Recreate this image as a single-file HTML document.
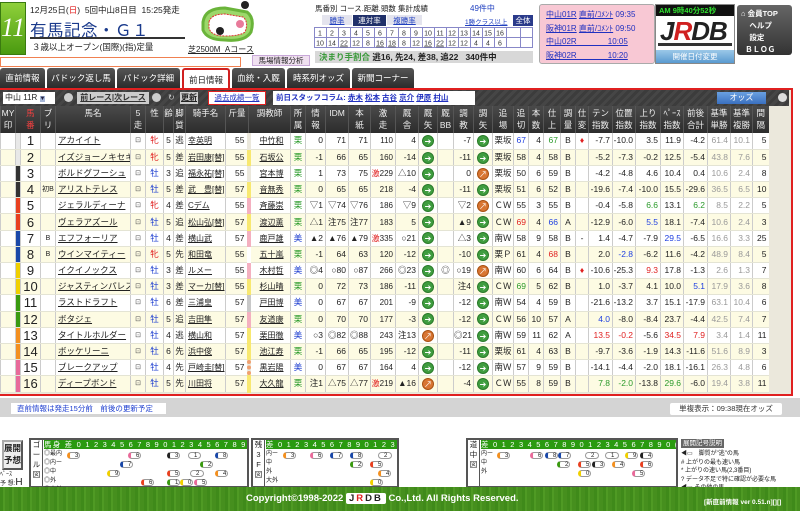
<!DOCTYPE html>
<html><head><meta charset="utf-8">
<style>
*{margin:0;padding:0;box-sizing:border-box}
body{width:800px;height:516px;overflow:hidden;background:#fff;font-family:"Liberation Sans","Noto Sans CJK JP",sans-serif;font-size:9px;color:#222;position:relative}
.a{position:absolute;white-space:nowrap}
a,.u{text-decoration:underline}
#badge{left:0;top:2px;width:26px;height:53px;background:linear-gradient(#8fd03a,#4a9a10);color:#fff;font:italic 26px "Liberation Serif",serif;text-align:center;line-height:50px;border:1px solid #3a7a10}
.tab{top:68px;height:21px;background:linear-gradient(#555,#2a2a2a);color:#fff;font-size:8.5px;text-align:center;line-height:20px;border-radius:3px 3px 0 0}
.tab.on{background:#fff;color:#222;border:2px solid #d02020;border-bottom:none;height:22px}
#box{left:0;top:88px;width:793px;height:308px;border:2px solid #e02020;border-left:none;background:#ebe8dc}
#tb{left:0;top:90px;width:789px;height:16px;background:repeating-linear-gradient(135deg,#3c3c3c 0 3px,#464646 3px 6px)}
table{position:absolute;left:0;top:106px;border-collapse:collapse;table-layout:fixed;width:768px}
th{background:linear-gradient(#4a4a4a,#2c2c2c);color:#eee;font-weight:normal;font-size:8.5px;height:27px;line-height:12px;vertical-align:top;padding-top:1px;border-left:1px solid #555;text-align:center;overflow:hidden;white-space:nowrap}
td{height:16.2px;border-left:1px solid #ccc;border-bottom:1px solid #e4e4d4;font-size:8.5px;text-align:right;padding:0 2px 0 0;white-space:nowrap;overflow:hidden;line-height:15px}
tr:nth-child(odd) td{background:#fdfbe3}
tr:nth-child(even) td{background:#fff}
td:nth-child(3){text-align:center;font-size:13px;padding:0}
td:nth-child(4),td:nth-child(6),td:nth-child(7),td:nth-child(8),td:nth-child(9),td:nth-child(13),td:nth-child(19),td:nth-child(20),td:nth-child(22),td:nth-child(23),td:nth-child(27),td:nth-child(28){text-align:center;padding:0}
td:nth-child(5),td:nth-child(10),td:nth-child(12){text-align:left;padding-left:2px}
td:nth-child(5) span{text-decoration:underline;font-size:8.5px}
td:nth-child(10),td:nth-child(12){text-decoration:underline;font-size:8px}
td:nth-child(12){border-left:4px solid transparent;padding-left:9px}
td:nth-child(34),td:nth-child(35){color:#999}
td:nth-child(4){font-size:7px}
td:nth-child(6){font-size:7px;color:#555}
td:nth-child(17){font-size:8px}
i.g,i.o{display:inline-block;width:12px;height:12px;border-radius:50%;vertical-align:middle;font-style:normal;color:#fff;font-size:8px;line-height:11px;text-align:center}
i.g{background:#3f9d3f;border:1px solid #2a7a2a}
i.o{background:#d87532;border:1px solid #a85010}
.R{color:#e02020}.B{color:#2040e0}.G{color:#2a9a2a}
.f{color:#e02020}.m{color:#2040d0}
.k{color:#2a9a2a}.mi{color:#2040d0}
.pill{position:absolute;height:7px;border-radius:4px;border:1px solid #999;background:#fff;font-size:6px;line-height:6px;padding-left:5px}
.dg{position:absolute;border:2px solid #555;background:#fff}
.dh{position:absolute;height:9px;background:#2a9a10;color:#fff;font-size:7.5px;line-height:9px;letter-spacing:1.2px;white-space:nowrap;overflow:hidden}
</style></head><body>

<div id="badge" class="a">11</div>
<div class="a" style="left:30px;top:4px;font-size:8.5px">12月25日(<span class="R">日</span>)&nbsp;&nbsp;5回中山8日目&nbsp;&nbsp;15:25発走</div>
<div class="a" style="left:30px;top:17px;font-size:16.5px;color:#1a3a8c;letter-spacing:.5px">有馬記念・Ｇ１</div>
<div class="a" style="left:30px;top:37px;width:155px;height:2px;background:#333"></div>
<div class="a" style="left:32px;top:41px;font-size:8.5px">３歳以上オープン(国際)(指)定量</div>
<svg class="a" style="left:195px;top:0" width="62" height="46"><path d="M8 22 Q10 8 30 8 L52 12 Q60 18 56 32 Q50 42 30 40 Q12 40 8 30Z" fill="#9cd86a" stroke="#6ab43a" stroke-width="3"/><path d="M14 22 Q16 14 30 14 L48 17 Q54 22 50 32 Q45 36 30 36 Q16 36 14 28Z" fill="#fff" stroke="#e03030" stroke-width="1" stroke-dasharray="2 1"/><circle cx="45" cy="24" r="4" fill="#e87a9a"/><circle cx="50" cy="5" r="4" fill="#222"/><circle cx="25" cy="31" r="4" fill="#222"/></svg>
<div class="a u" style="left:188px;top:44px;font-size:8px">芝2500M&nbsp;&nbsp;Aコース</div>
<div class="a" style="left:0;top:57px;width:241px;height:10px;border:1px solid #f08050;background:#fff"></div>
<div class="a" style="left:252px;top:55px;width:58px;height:11px;background:#f0e0f0;border:1px solid #c8a8d8;font-size:7.5px;text-align:center;line-height:10px">馬場情報分析</div>

<div class="a" style="left:315px;top:3px;font-size:7.5px">馬番別 コース.距離.頭数 集計成績</div>
<div class="a" style="left:470px;top:3px;font-size:8px;color:#2040c0">49件中</div>
<div class="a u" style="left:322px;top:15px;width:30px;height:10px;background:#e4e4ee;font-size:7.5px;color:#2040c0;text-align:center">勝率</div>
<div class="a" style="left:353px;top:15px;width:33px;height:11px;background:#20306a;font-size:7.5px;color:#fff;text-align:center">連対率</div>
<div class="a u" style="left:387px;top:15px;width:35px;height:10px;background:#e4e4ee;font-size:7.5px;color:#2040c0;text-align:center">複勝率</div>
<div class="a u" style="left:465px;top:16px;font-size:6.5px;color:#2040c0">1勝クラス以上</div>
<div class="a" style="left:513px;top:15px;width:20px;height:11px;background:#2a3a8a;color:#fff;font-size:7.5px;text-align:center">全体</div>
<svg class="a" style="left:314px;top:27px" width="220" height="22"><g fill="none" stroke="#8888c8"><rect x=".5" y=".5" width="218" height="20"/><line x1="0" y1="10.5" x2="219" y2="10.5"/>
<path d="M12.5 0V21M24.5 0V21M36.5 0V21M48.5 0V21M60.5 0V21M72.5 0V21M84.5 0V21M96.5 0V21M108.5 0V21M120.5 0V21M132.5 0V21M144.5 0V21M156.5 0V21M168.5 0V21M180.5 0V21M192.5 0V21M206.5 0V21"/></g>
<g font-size="7" fill="#333" text-anchor="middle" font-family="Liberation Sans"><text x="6" y="8.5">1</text><text x="18" y="8.5">2</text><text x="30" y="8.5">3</text><text x="42" y="8.5">4</text><text x="54" y="8.5">5</text><text x="66" y="8.5">6</text><text x="78" y="8.5">7</text><text x="90" y="8.5">8</text><text x="102" y="8.5">9</text><text x="114" y="8.5">10</text><text x="126" y="8.5">11</text><text x="138" y="8.5">12</text><text x="150" y="8.5">13</text><text x="162" y="8.5">14</text><text x="174" y="8.5">15</text><text x="186" y="8.5">16</text>
<text x="6" y="18.5">10</text><text x="18" y="18.5">14</text><text x="30" y="18.5" text-decoration="underline">22</text><text x="42" y="18.5">12</text><text x="54" y="18.5">8</text><text x="66" y="18.5" text-decoration="underline">16</text><text x="78" y="18.5" text-decoration="underline">18</text><text x="90" y="18.5">8</text><text x="102" y="18.5">12</text><text x="114" y="18.5" text-decoration="underline">16</text><text x="126" y="18.5" text-decoration="underline">22</text><text x="138" y="18.5">12</text><text x="150" y="18.5">12</text><text x="162" y="18.5">4</text><text x="174" y="18.5">4</text><text x="186" y="18.5">6</text></g></svg>
<div class="a" style="left:315px;top:51px;width:218px;height:12px;background:#d8d8d8;font-size:8.5px;font-weight:bold;line-height:12px;padding-left:4px"><span style="color:#3a9a3a">決まり手割合</span> 逃16, 先24, 差38, 追22&nbsp;&nbsp;&nbsp;340件中</div>

<div class="a" style="left:539px;top:4px;width:116px;height:60px;background:#f8c8d4;border:1px solid #aaa;border-radius:3px;font-size:8px;color:#2030c0;line-height:13.5px;padding:3px 0 0 6px"><span class="u">中山01R</span> <span class="u">直前/ｺﾒﾝﾄ</span> 09:35<br><span class="u">阪神01R</span> <span class="u">直前/ｺﾒﾝﾄ</span> 09:50<br><span class="u">中山02R&nbsp;&nbsp;&nbsp;&nbsp;&nbsp;&nbsp;&nbsp;&nbsp;&nbsp;&nbsp;&nbsp;&nbsp;&nbsp;&nbsp;10:05</span><br><span class="u">阪神02R&nbsp;&nbsp;&nbsp;&nbsp;&nbsp;&nbsp;&nbsp;&nbsp;&nbsp;&nbsp;&nbsp;&nbsp;&nbsp;&nbsp;10:20</span></div>
<div class="a" style="left:655px;top:4px;width:80px;height:60px;background:#fff;border:1px solid #888"></div>
<div class="a" style="left:656px;top:5px;width:78px;height:11px;background:#111;color:#30e030;font-size:7.5px;line-height:11px;padding-left:3px;font-weight:bold">AM 9時40分52秒</div>
<div class="a" style="left:660px;top:17px;width:74px;height:26px;font:italic bold 26px 'Liberation Sans',sans-serif;color:#222;letter-spacing:-1px;line-height:28px">J<span style="color:#d02020">R</span>DB</div>
<div class="a" style="left:658px;top:43px;width:74px;height:3px;background:#333"></div>
<div class="a" style="left:656px;top:50px;width:78px;height:13px;background:linear-gradient(#9cc8e8,#5a9ad0);color:#fff;font-size:7.5px;text-align:center;line-height:13px">開催日付変更</div>
<div class="a" style="left:737px;top:5px;width:55px;height:50px;background:linear-gradient(#666,#333);border-radius:3px;color:#fff;font-size:7.5px;font-weight:bold;line-height:12px;padding:3px 0 0 4px">⌂ 会員TOP<br>&nbsp;&nbsp;&nbsp;&nbsp;ヘルプ<br>&nbsp;&nbsp;&nbsp;&nbsp;設定<br>&nbsp;&nbsp;ＢＬＯＧ</div>

<div class="a tab" style="left:0;width:45px">直前情報</div>
<div class="a tab" style="left:47px;width:68px">パドック返し馬</div>
<div class="a tab" style="left:117px;width:63px">パドック詳細</div>
<div class="a tab on" style="left:182px;width:48px">前日情報</div>
<div class="a tab" style="left:232px;width:53px">血統・入厩</div>
<div class="a tab" style="left:287px;width:63px">時系列オッズ</div>
<div class="a tab" style="left:352px;width:62px">新聞コーナー</div>

<div id="box" class="a"></div>
<div id="tb" class="a"></div>
<div class="a" style="left:3px;top:92px;width:52px;height:12px;background:#fff;font-size:8px;line-height:12px;padding-left:2px">中山 11R <span style="background:#a8b8d8;color:#224;font-size:6px">▼</span></div>
<div class="a" style="left:64px;top:93px;width:9px;height:9px;border-radius:50%;background:#ccc"></div>
<div class="a" style="left:77px;top:92px;width:72px;height:12px;background:#ccc;font-size:8px;line-height:12px;text-align:center;font-weight:bold;color:#333"><span class="u">前レース</span>|<span class="u">次レース</span></div>
<div class="a" style="left:152px;top:93px;width:9px;height:9px;border-radius:50%;background:#ccc"></div>
<div class="a" style="left:168px;top:93px;color:#ccc;font-size:8px">↻</div>
<div class="a u" style="left:180px;top:92px;width:18px;height:12px;background:#ccc;font-size:8px;line-height:12px;text-align:center;font-weight:bold">更新</div>
<div class="a u" style="left:208px;top:91px;width:58px;height:14px;background:#fff;border:1.5px solid #e02020;font-size:7.5px;line-height:11px;text-align:center;color:#2030c0">過去成績一覧</div>
<div class="a" style="left:273px;top:91px;width:202px;height:14px;background:#fff;font-size:7.5px;line-height:14px;padding-left:3px;color:#2030c0;font-weight:bold">前日スタッフコラム: <span class="u">赤木</span> <span class="u">松本</span> <span class="u">古谷</span> <span class="u">京介</span> <span class="u">伊原</span> <span class="u">村山</span></div>
<div class="a" style="left:717px;top:92px;width:49px;height:12px;background:linear-gradient(#6aa0e0,#3a70c0);color:#fff;font-size:8px;text-align:center;line-height:12px">オッズ</div>
<div class="a" style="left:778px;top:93px;width:9px;height:9px;border-radius:50%;background:#ddd"></div>

<table>
<colgroup><col style="width:15px"><col style="width:5px"><col style="width:20px"><col style="width:15px"><col style="width:75px"><col style="width:15px"><col style="width:18px"><col style="width:10px"><col style="width:12px"><col style="width:40px"><col style="width:23px"><col style="width:42px"><col style="width:15px"><col style="width:20px"><col style="width:23px"><col style="width:22px"><col style="width:25px"><col style="width:23px"><col style="width:19px"><col style="width:16px"><col style="width:20px"><col style="width:19px"><col style="width:21px"><col style="width:15px"><col style="width:15px"><col style="width:17px"><col style="width:15px"><col style="width:13px"><col style="width:24px"><col style="width:23px"><col style="width:25px"><col style="width:23px"><col style="width:24px"><col style="width:23px"><col style="width:22px"><col style="width:16px"></colgroup>
<tr><th>MY<br>印</th><th colspan="2" style="color:#f04040">&nbsp;&nbsp;馬<br>&nbsp;&nbsp;番</th><th>ブ<br>リ</th><th>馬名</th><th>5<br>走</th><th>性</th><th>齢</th><th>脚<br>質</th><th>騎手名</th><th>斤量</th><th>調教師</th><th>所<br>属</th><th>情<br>報</th><th>IDM</th><th>本<br>紙</th><th>激<br>走</th><th>厩<br>舎</th><th>厩<br>矢</th><th>厩<br>BB</th><th>調<br>教</th><th>調<br>矢</th><th>追<br>場</th><th>追<br>切</th><th>本<br>数</th><th>仕<br>上</th><th>調<br>量</th><th>仕<br>変</th><th>テン<br>指数</th><th>位置<br>指数</th><th>上り<br>指数</th><th>ﾍﾟｰｽ<br>指数</th><th>前後<br>合計</th><th>基準<br>単勝</th><th>基準<br>複勝</th><th>間<br>隔</th></tr>
<tr><td></td><td style="background:#e8e8e8"></td><td>1</td><td></td><td><span>アカイイト</span></td><td>⊡</td><td class="f">牝</td><td>5</td><td>逃</td><td>幸英明</td><td>55</td><td>中竹和</td><td class="k">栗</td><td>0</td><td>71</td><td>71</td><td>110</td><td>4</td><td><i class="g">➔</i></td><td></td><td>-7</td><td><i class="g">➔</i></td><td>栗坂</td><td class="B">67</td><td>4</td><td class="G">67</td><td>B</td><td class="R">♦</td><td>-7.7</td><td>-10.0</td><td>3.5</td><td>11.9</td><td>-4.2</td><td>61.4</td><td>10.1</td><td>5</td></tr>
<tr><td></td><td style="background:#e8e8e8"></td><td>2</td><td></td><td><span>イズジョーノキセキ</span></td><td>⊡</td><td class="f">牝</td><td>5</td><td>差</td><td>岩田康[替]</td><td>55</td><td style="border-left-color:#f8e870">石坂公</td><td class="k">栗</td><td>-1</td><td>66</td><td>65</td><td>160</td><td>-14</td><td><i class="g">➔</i></td><td></td><td>-11</td><td><i class="g">➔</i></td><td>栗坂</td><td>58</td><td>4</td><td>58</td><td>B</td><td></td><td>-5.2</td><td>-7.3</td><td>-0.2</td><td>12.5</td><td>-5.4</td><td>43.8</td><td>7.6</td><td>5</td></tr>
<tr><td></td><td style="background:#333"></td><td>3</td><td></td><td><span>ボルドグフーシュ</span></td><td>⊡</td><td class="m">牡</td><td>3</td><td>追</td><td>福永祐[替]</td><td>55</td><td>宮本博</td><td class="k">栗</td><td>1</td><td>73</td><td>75</td><td><span class="R">激</span>229</td><td>△10</td><td><i class="g">➔</i></td><td></td><td>0</td><td><i class="o">↗</i></td><td>栗坂</td><td>50</td><td>6</td><td>59</td><td>B</td><td></td><td>-4.2</td><td>-4.8</td><td>4.6</td><td>10.4</td><td>0.4</td><td>10.6</td><td>2.4</td><td>8</td></tr>
<tr><td></td><td style="background:#333"></td><td>4</td><td>初B</td><td><span>アリストテレス</span></td><td>⊡</td><td class="m">牡</td><td>5</td><td>差</td><td>武　豊[替]</td><td>57</td><td style="border-left-color:#f8e870">音無秀</td><td class="k">栗</td><td>0</td><td>65</td><td>65</td><td>218</td><td>-4</td><td><i class="g">➔</i></td><td></td><td>-11</td><td><i class="g">➔</i></td><td>栗坂</td><td>51</td><td>6</td><td>52</td><td>B</td><td></td><td>-19.6</td><td>-7.4</td><td>-10.0</td><td>15.5</td><td>-29.6</td><td>36.5</td><td>6.5</td><td>10</td></tr>
<tr><td></td><td style="background:#e84020"></td><td>5</td><td></td><td><span>ジェラルディーナ</span></td><td>⊡</td><td class="f">牝</td><td>4</td><td>差</td><td>Cデム</td><td>55</td><td style="border-left-color:#f4b0c0">斉藤崇</td><td class="k">栗</td><td>▽1</td><td>▽74</td><td>▽76</td><td>186</td><td>▽9</td><td><i class="g">➔</i></td><td></td><td>▽2</td><td><i class="o">↗</i></td><td>ＣＷ</td><td>55</td><td>3</td><td>55</td><td>B</td><td></td><td>-0.4</td><td>-5.8</td><td class="G">6.6</td><td>13.1</td><td class="G">6.2</td><td>8.5</td><td>2.2</td><td>5</td></tr>
<tr><td></td><td style="background:#e84020"></td><td>6</td><td></td><td><span>ヴェラアズール</span></td><td>⊡</td><td class="m">牡</td><td>5</td><td>追</td><td>松山弘[替]</td><td>57</td><td style="border-left-color:#f8e870">渡辺薫</td><td class="k">栗</td><td>△1</td><td>注75</td><td>注77</td><td>183</td><td>5</td><td><i class="g">➔</i></td><td></td><td>▲9</td><td><i class="g">➔</i></td><td>ＣＷ</td><td class="R">69</td><td>4</td><td class="B">66</td><td>A</td><td></td><td>-12.9</td><td>-6.0</td><td class="B">5.5</td><td>18.1</td><td>-7.4</td><td>10.6</td><td>2.4</td><td>3</td></tr>
<tr><td></td><td style="background:#1a48a8"></td><td>7</td><td>B</td><td><span>エフフォーリア</span></td><td>⊡</td><td class="m">牡</td><td>4</td><td>差</td><td>横山武</td><td>57</td><td style="border-left-color:#f4b0c0">鹿戸雄</td><td class="mi">美</td><td>▲2</td><td>▲76</td><td>▲79</td><td><span class="R">激</span>335</td><td>○21</td><td><i class="g">➔</i></td><td></td><td>△3</td><td><i class="g">➔</i></td><td>南Ｗ</td><td>58</td><td>9</td><td>58</td><td>B</td><td>-</td><td>1.4</td><td>-4.7</td><td>-7.9</td><td class="B">29.5</td><td>-6.5</td><td>16.6</td><td>3.3</td><td>25</td></tr>
<tr><td></td><td style="background:#1a48a8"></td><td>8</td><td>B</td><td><span>ウインマイティー</span></td><td>⊡</td><td class="f">牝</td><td>5</td><td>先</td><td>和田竜</td><td>55</td><td style="border-left-color:#fff">五十嵐</td><td class="k">栗</td><td>-1</td><td>64</td><td>63</td><td>120</td><td>-12</td><td><i class="g">➔</i></td><td></td><td>-10</td><td><i class="g">➔</i></td><td>栗Ｐ</td><td>61</td><td>4</td><td class="R">68</td><td>B</td><td></td><td>2.0</td><td class="B">-2.8</td><td>-6.2</td><td>11.6</td><td>-4.2</td><td>48.9</td><td>8.4</td><td>5</td></tr>
<tr><td></td><td style="background:#f0d000"></td><td>9</td><td></td><td><span>イクイノックス</span></td><td>⊡</td><td class="m">牡</td><td>3</td><td>差</td><td>ルメー</td><td>55</td><td style="border-left-color:#f4b0c0">木村哲</td><td class="mi">美</td><td>◎4</td><td>○80</td><td>○87</td><td>266</td><td>◎23</td><td><i class="g">➔</i></td><td>◎</td><td>○19</td><td><i class="o">↗</i></td><td>南Ｗ</td><td>60</td><td>6</td><td>64</td><td>B</td><td class="R">♦</td><td>-10.6</td><td>-25.3</td><td class="R">9.3</td><td>17.8</td><td>-1.3</td><td>2.6</td><td>1.3</td><td>7</td></tr>
<tr><td></td><td style="background:#f0d000"></td><td>10</td><td></td><td><span>ジャスティンパレス</span></td><td>⊡</td><td class="m">牡</td><td>3</td><td>差</td><td>マーカ[替]</td><td>55</td><td style="border-left-color:#f8e870">杉山晴</td><td class="k">栗</td><td>0</td><td>72</td><td>73</td><td>186</td><td>-11</td><td><i class="g">➔</i></td><td></td><td>注4</td><td><i class="g">➔</i></td><td>ＣＷ</td><td class="G">69</td><td>5</td><td>62</td><td>B</td><td></td><td>1.0</td><td>-3.7</td><td>4.1</td><td>10.0</td><td class="B">5.1</td><td>17.9</td><td>3.6</td><td>8</td></tr>
<tr><td></td><td style="background:#3a9a10"></td><td>11</td><td></td><td><span>ラストドラフト</span></td><td>⊡</td><td class="m">牡</td><td>6</td><td>差</td><td>三浦皇</td><td>57</td><td style="border-left-color:#c8c8c8">戸田博</td><td class="mi">美</td><td>0</td><td>67</td><td>67</td><td>201</td><td>-9</td><td><i class="g">➔</i></td><td></td><td>-12</td><td><i class="g">➔</i></td><td>南Ｗ</td><td>54</td><td>4</td><td>59</td><td>B</td><td></td><td>-21.6</td><td>-13.2</td><td>3.7</td><td>15.1</td><td>-17.9</td><td>63.1</td><td>10.4</td><td>6</td></tr>
<tr><td></td><td style="background:#3a9a10"></td><td>12</td><td></td><td><span>ボタジェ</span></td><td>⊡</td><td class="m">牡</td><td>5</td><td>追</td><td>吉田隼</td><td>57</td><td style="border-left-color:#f4b0c0">友道康</td><td class="k">栗</td><td>0</td><td>70</td><td>70</td><td>177</td><td>-3</td><td><i class="g">➔</i></td><td></td><td>-12</td><td><i class="g">➔</i></td><td>ＣＷ</td><td>56</td><td>10</td><td>57</td><td>A</td><td></td><td class="B">4.0</td><td>-8.0</td><td>-8.4</td><td>23.7</td><td>-4.4</td><td>42.5</td><td>7.4</td><td>7</td></tr>
<tr><td></td><td style="background:#f39020"></td><td>13</td><td></td><td><span>タイトルホルダー</span></td><td>⊡</td><td class="m">牡</td><td>4</td><td>逃</td><td>横山和</td><td>57</td><td style="border-left-color:#f8e870">栗田徹</td><td class="mi">美</td><td>○3</td><td>◎82</td><td>◎88</td><td>243</td><td>注13</td><td><i class="o">↗</i></td><td></td><td>◎21</td><td><i class="g">➔</i></td><td>南Ｗ</td><td>59</td><td>11</td><td>62</td><td>A</td><td></td><td class="R">13.5</td><td class="R">-0.2</td><td>-5.6</td><td class="R">34.5</td><td class="R">7.9</td><td>3.4</td><td>1.4</td><td>11</td></tr>
<tr><td></td><td style="background:#f39020"></td><td>14</td><td></td><td><span>ボッケリーニ</span></td><td>⊡</td><td class="m">牡</td><td>6</td><td>先</td><td>浜中俊</td><td>57</td><td style="border-left-color:#f8e870">池江寿</td><td class="k">栗</td><td>-1</td><td>66</td><td>65</td><td>195</td><td>-12</td><td><i class="g">➔</i></td><td></td><td>-11</td><td><i class="g">➔</i></td><td>栗坂</td><td>61</td><td>4</td><td>63</td><td>B</td><td></td><td>-9.7</td><td>-3.6</td><td>-1.9</td><td>14.3</td><td>-11.6</td><td>51.6</td><td>8.9</td><td>3</td></tr>
<tr><td></td><td style="background:#e86a9a"></td><td>15</td><td></td><td><span>ブレークアップ</span></td><td>⊡</td><td class="m">牡</td><td>4</td><td>先</td><td>戸崎圭[替]</td><td>57</td><td style="border-left:4px dotted #f0a070">黒岩陽</td><td class="mi">美</td><td>0</td><td>67</td><td>67</td><td>164</td><td>4</td><td><i class="g">➔</i></td><td></td><td>-12</td><td><i class="g">➔</i></td><td>南Ｗ</td><td>57</td><td>9</td><td>59</td><td>B</td><td></td><td>-14.1</td><td>-4.4</td><td>-2.0</td><td>18.1</td><td>-16.1</td><td>26.3</td><td>4.8</td><td>6</td></tr>
<tr><td></td><td style="background:#e86a9a"></td><td>16</td><td></td><td><span>ディープボンド</span></td><td>⊡</td><td class="m">牡</td><td>5</td><td>先</td><td>川田将</td><td>57</td><td style="border-left-color:#f8e870">大久龍</td><td class="k">栗</td><td>注1</td><td>△75</td><td>△77</td><td><span class="R">激</span>219</td><td>▲16</td><td><i class="o">↗</i></td><td></td><td>-4</td><td><i class="g">➔</i></td><td>ＣＷ</td><td>55</td><td>8</td><td>59</td><td>B</td><td></td><td class="G">7.8</td><td class="G">-2.0</td><td>-13.8</td><td class="G">29.6</td><td>-6.0</td><td>19.4</td><td>3.8</td><td>11</td></tr>
</table>

<div class="a" style="left:0;top:398px;width:800px;height:19px;background:#d4d4d4"></div>
<div class="a" style="left:11px;top:403px;width:155px;height:11px;background:#fff;color:#2040d0;font-size:7.5px;line-height:11px;padding-left:6px">直前情報は発走15分前　前後の更新予定</div>
<div class="a" style="left:670px;top:403px;width:112px;height:12px;background:#fff;border-radius:2px;font-size:7.5px;line-height:12px;text-align:center;color:#333">単複表示：09:38現在オッズ</div>

<div class="a" style="left:2px;top:440px;width:21px;height:30px;background:#eee;border:2px outset #aaa;font-size:8.5px;line-height:12px;text-align:center;font-weight:bold">展開<br>予想</div>
<div class="a" style="left:0;top:471px;font-size:6px;line-height:8px">ﾍﾟｰｽ<br>予 想:<span style="font-size:10px">H</span></div>
<div class="dg" style="left:29px;top:438px;width:220px;height:50px"></div>
<div class="a" style="left:31px;top:440px;width:12px;height:46px;border-right:1px solid #555;font-size:7.5px;line-height:10px;text-align:center">ゴ<br>ー<br>ル<br>図</div>
<div class="dh" style="left:44px;top:440px;width:203px">馬身 差 0 1 2 3 4 5 6 7 8 9 0 1 2 3 4 5 6 7 8 9 0 1 2 3 4 5 6</div>
<div class="a" style="left:44px;top:450px;font-size:6px;line-height:9px">◎最内<br>◎内ー<br>◎中<br>◎外<br>◎大外</div>
<div class="pill" style="left:67px;top:452px;width:13px;border-left:3px solid #f39020">3</div>
<div class="pill" style="left:128px;top:452px;width:13px;border-left:3px solid #e86a9a">6</div>
<div class="pill" style="left:167px;top:452px;width:13px;border-left:3px solid #222">3</div>
<div class="pill" style="left:188px;top:452px;width:13px">1</div>
<div class="pill" style="left:215px;top:452px;width:13px;border-left:3px solid #1a48a8">8</div>
<div class="pill" style="left:120px;top:461px;width:13px;border-left:3px solid #1a48a8">7</div>
<div class="pill" style="left:200px;top:461px;width:13px;border-left:3px solid #3a9a10">2</div>
<div class="pill" style="left:107px;top:470px;width:13px;border-left:3px solid #f0d000">9</div>
<div class="pill" style="left:167px;top:470px;width:13px;border-left:3px solid #e84020">5</div>
<div class="pill" style="left:190px;top:470px;width:14px">2</div>
<div class="pill" style="left:215px;top:470px;width:13px;border-left:3px solid #f39020">4</div>
<div class="pill" style="left:180px;top:479px;width:13px;border-left:3px solid #f0d000">0</div>
<div class="pill" style="left:141px;top:479px;width:13px;border-left:3px solid #e84020">6</div>
<div class="pill" style="left:167px;top:479px;width:13px;border-left:3px solid #3a9a10">1</div>
<div class="pill" style="left:194px;top:479px;width:13px;border-left:3px solid #e86a9a">5</div>

<div class="dg" style="left:251px;top:438px;width:148px;height:50px"></div>
<div class="a" style="left:253px;top:440px;width:12px;height:46px;border-right:1px solid #555;font-size:7.5px;line-height:10px;text-align:center">残<br>3<br>F<br>図</div>
<div class="dh" style="left:266px;top:440px;width:131px">差 0 1 2 3 4 5 6 7 8 9 0 1 2 3 4 5 6 7</div>
<div class="a" style="left:266px;top:450px;font-size:6px;line-height:9px">内ー<br>中<br>外<br>大外</div>
<div class="pill" style="left:283px;top:452px;width:13px;border-left:3px solid #f39020">3</div>
<div class="pill" style="left:310px;top:452px;width:13px;border-left:3px solid #e86a9a">6</div>
<div class="pill" style="left:330px;top:452px;width:13px;border-left:3px solid #1a48a8">7</div>
<div class="pill" style="left:350px;top:452px;width:13px;border-left:3px solid #1a48a8">8</div>
<div class="pill" style="left:378px;top:452px;width:14px">2</div>
<div class="pill" style="left:350px;top:461px;width:13px;border-left:3px solid #3a9a10">2</div>
<div class="pill" style="left:370px;top:461px;width:13px;border-left:3px solid #e84020">5</div>
<div class="pill" style="left:378px;top:470px;width:13px;border-left:3px solid #f39020">4</div>
<div class="pill" style="left:370px;top:479px;width:13px;border-left:3px solid #f0d000">0</div>

<div class="dg" style="left:466px;top:438px;width:212px;height:50px"></div>
<div class="a" style="left:468px;top:440px;width:12px;height:46px;border-right:1px solid #555;font-size:7.5px;line-height:10px;text-align:center">道<br>中<br>図</div>
<div class="dh" style="left:481px;top:440px;width:195px">差 0 1 2 3 4 5 6 7 8 9 0 1 2 3 4 5 6 7 8 9 0 (1=半馬身)</div>
<div class="a" style="left:481px;top:450px;font-size:6px;line-height:9px">内ー<br>中<br>外</div>
<div class="pill" style="left:497px;top:452px;width:13px;border-left:3px solid #f39020">3</div>
<div class="pill" style="left:530px;top:452px;width:13px;border-left:3px solid #e86a9a">6</div>
<div class="pill" style="left:545px;top:452px;width:13px;border-left:3px solid #1a48a8">8</div>
<div class="pill" style="left:558px;top:452px;width:13px;border-left:3px solid #1a48a8">7</div>
<div class="pill" style="left:585px;top:452px;width:14px">2</div>
<div class="pill" style="left:605px;top:452px;width:14px">1</div>
<div class="pill" style="left:625px;top:452px;width:13px;border-left:3px solid #f0d000">9</div>
<div class="pill" style="left:640px;top:452px;width:13px;border-left:3px solid #222">4</div>
<div class="pill" style="left:557px;top:461px;width:13px;border-left:3px solid #3a9a10">2</div>
<div class="pill" style="left:578px;top:461px;width:13px;border-left:3px solid #e84020">5</div>
<div class="pill" style="left:592px;top:461px;width:13px;border-left:3px solid #222">3</div>
<div class="pill" style="left:612px;top:461px;width:13px;border-left:3px solid #f39020">4</div>
<div class="pill" style="left:640px;top:461px;width:13px;border-left:3px solid #e84020">6</div>
<div class="pill" style="left:578px;top:470px;width:13px;border-left:3px solid #f0d000">0</div>
<div class="pill" style="left:632px;top:470px;width:13px;border-left:3px solid #e86a9a">5</div>

<div class="a" style="left:681px;top:439px;width:43px;height:9px;background:#666;color:#fff;font-size:6.5px;line-height:9px;text-align:center">展開記号説明</div>
<div class="a" style="left:681px;top:450px;font-size:6px;line-height:8.5px">◀▭　脚質が"逃"の馬<br># 上がりの最も速い馬<br>* 上がりの速い馬(2,3番目)<br>? データ不足で特に確認が必要な馬<br>◀▭ その他の馬</div>

<div class="a" style="left:0;top:487px;width:800px;height:24px;background:repeating-linear-gradient(90deg,#3f8a1a 0 3px,#4f9a24 3px 5px,#468f1e 5px 9px)"></div>
<div class="a" style="left:246px;top:493px;color:#fff;font-weight:bold;font-size:9.5px">Copyright©1998-2022 <span style="background:#fff;color:#222;padding:0 3px;border-radius:2px;letter-spacing:2px">J<span class="R">R</span>DB</span> Co.,Ltd. All Rights Reserved.</div>
<div class="a" style="left:704px;top:496px;color:#fff;font-size:6.5px;font-weight:bold">[新直前情報 ver 0.51.n][][]</div>
</body></html>
